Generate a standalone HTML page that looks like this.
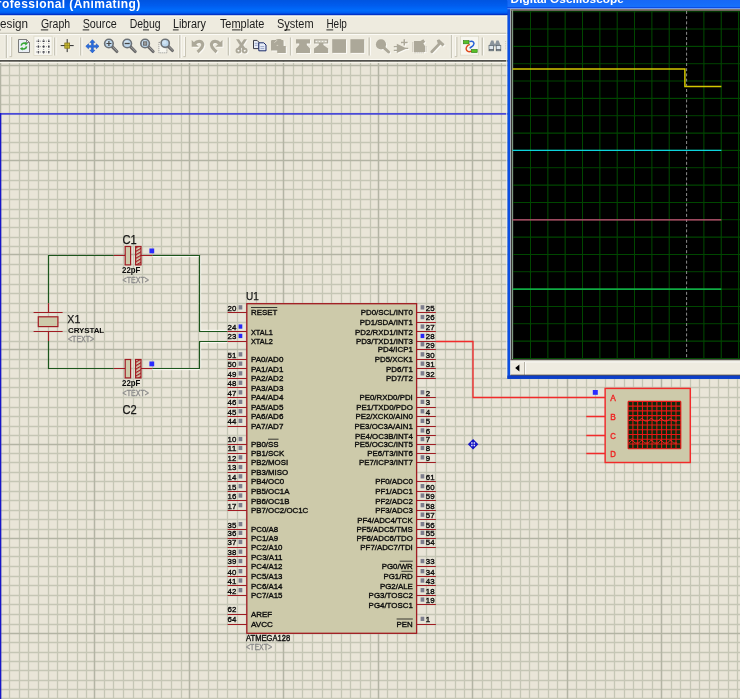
<!DOCTYPE html>
<html lang="en"><head><meta charset="utf-8"><title>ISIS Professional (Animating)</title>
<style>
html,body{margin:0;padding:0;background:#e9e5d8;overflow:hidden}
body{width:740px;height:699px;position:relative}
svg{display:block;position:absolute;left:0;top:0;will-change:transform;font-family:'Liberation Sans', sans-serif}
</style></head><body>
<svg width="740" height="699" viewBox="0 0 740 699">
<defs>
<linearGradient id="tb" x1="0" y1="0" x2="0" y2="1"><stop offset="0" stop-color="#0255e0"/><stop offset="0.35" stop-color="#025cee"/><stop offset="0.68" stop-color="#046cfc"/><stop offset="0.84" stop-color="#025cf0"/><stop offset="0.93" stop-color="#0232c8"/><stop offset="1" stop-color="#0232c8"/></linearGradient>
<linearGradient id="tb2" x1="0" y1="0" x2="0" y2="1"><stop offset="0" stop-color="#1468f6"/><stop offset="0.72" stop-color="#1670fa"/><stop offset="0.84" stop-color="#0444e0"/><stop offset="0.95" stop-color="#6a9cff"/><stop offset="1" stop-color="#6a9cff"/></linearGradient>
<pattern id="hatch" width="3" height="3" patternUnits="userSpaceOnUse" patternTransform="rotate(60)"><rect width="3" height="3" fill="#d6d2b4"/><rect width="1.3" height="3" fill="#a62028"/></pattern>
<filter id="soft" filterUnits="userSpaceOnUse" x="-8" y="-8" width="756" height="715"><feGaussianBlur stdDeviation="0.38"/></filter>
</defs>
<g filter="url(#soft)">
<rect x="-8" y="61" width="756" height="646" fill="#e9e5d8"/>
<g fill="none"><path d="M9.5 61V707M19.5 61V707M28.5 61V707M38.5 61V707M48.5 61V707M57.5 61V707M67.5 61V707M77.5 61V707M86.5 61V707M104.5 61V707M113.5 61V707M123.5 61V707M133.5 61V707M142.5 61V707M152.5 61V707M161.5 61V707M171.5 61V707M181.5 61V707M198.5 61V707M208.5 61V707M217.5 61V707M227.5 61V707M237.5 61V707M246.5 61V707M256.5 61V707M266.5 61V707M275.5 61V707M293.5 61V707M302.5 61V707M312.5 61V707M322.5 61V707M331.5 61V707M341.5 61V707M350.5 61V707M360.5 61V707M370.5 61V707M387.5 61V707M397.5 61V707M406.5 61V707M416.5 61V707M426.5 61V707M435.5 61V707M445.5 61V707M455.5 61V707M464.5 61V707M482.5 61V707M491.5 61V707M501.5 61V707M510.5 61V707M520.5 61V707M529.5 61V707M538.5 61V707M548.5 61V707M557.5 61V707M576.5 61V707M586.5 61V707M595.5 61V707M605.5 61V707M614.5 61V707M624.5 61V707M633.5 61V707M642.5 61V707M652.5 61V707M671.5 61V707M680.5 61V707M690.5 61V707M699.5 61V707M709.5 61V707M718.5 61V707M728.5 61V707M737.5 61V707M-8 75.5H748M-8 85.5H748M-8 95.5H748M-8 104.5H748M-8 113.5H748M-8 123.5H748M-8 133.5H748M-8 142.5H748M-8 152.5H748M-8 170.5H748M-8 180.5H748M-8 189.5H748M-8 199.5H748M-8 209.5H748M-8 218.5H748M-8 227.5H748M-8 237.5H748M-8 246.5H748M-8 264.5H748M-8 274.5H748M-8 284.5H748M-8 293.5H748M-8 303.5H748M-8 312.5H748M-8 322.5H748M-8 331.5H748M-8 341.5H748M-8 359.5H748M-8 368.5H748M-8 378.5H748M-8 387.5H748M-8 397.5H748M-8 407.5H748M-8 416.5H748M-8 426.5H748M-8 435.5H748M-8 453.5H748M-8 462.5H748M-8 472.5H748M-8 481.5H748M-8 491.5H748M-8 500.5H748M-8 510.5H748M-8 519.5H748M-8 529.5H748M-8 547.5H748M-8 556.5H748M-8 566.5H748M-8 576.5H748M-8 585.5H748M-8 595.5H748M-8 604.5H748M-8 614.5H748M-8 624.5H748M-8 642.5H748M-8 652.5H748M-8 661.5H748M-8 670.5H748M-8 680.5H748M-8 689.5H748M-8 698.5H748" stroke="#c5c6b5" stroke-width="1.3"/><path d="M0.5 61V707M94.5 61V707M189.5 61V707M283.5 61V707M378.5 61V707M472.5 61V707M567.5 61V707M661.5 61V707M-8 65.5H748M-8 160.5H748M-8 254.5H748M-8 349.5H748M-8 444.5H748M-8 538.5H748M-8 633.5H748" stroke="#b3b4a4" stroke-width="1.5"/></g>
<path d="M0 113.9H748" fill="none" stroke="#4a4ad8" stroke-width="1.8"/><path d="M0.4 707V113" fill="none" stroke="#1414c8" stroke-width="1.8"/>
<path d="M152.30 256.65H200.65V330.35H227.56M152.30 369.65H199.50M200.65 368.50V342.65H227.56" fill="none" stroke="#fcfbf6" stroke-width="1"/>
<g fill="none" stroke="#1e561e" stroke-width="1.2">
<path d="M113.78 255.50H48.50V303.20"/>
<path d="M152.30 255.50H199.50V331.50H227.56"/>
<path d="M48.50 341.10V368.50H113.78"/>
<path d="M152.30 368.50H199.50V341.50H227.56"/>
</g>
<path d="M435.86 341.50H473.0V397.50H605.14" fill="none" stroke="#f22c2c" stroke-width="1.35"/>
<g fill="none" stroke="#a01a22" stroke-width="1.2">
<path d="M48.50 303.20V312.50M48.50 331.70V341.10"/>
<path d="M33.6 312.50H62.6M33.6 331.50H62.6"/>
<rect x="38.3" y="316.8" width="19.6" height="9.8" fill="#cdcaaa"/>
</g>
<text x="67.30" y="322.60" font-size="11.6" fill="#161616" stroke="#161616" stroke-width="0.25" textLength="13.00" lengthAdjust="spacingAndGlyphs">X1</text>
<text x="68.00" y="333.20" font-size="8" fill="#0c0c0c" font-weight="bold" textLength="36.20" lengthAdjust="spacing">CRYSTAL</text>
<text x="68.00" y="342.20" font-size="8.3" fill="#8a8a8a" stroke="#8a8a8a" stroke-width="0.3" textLength="26.20" lengthAdjust="spacingAndGlyphs">&lt;TEXT&gt;</text>
<g fill="none" stroke="#a01a22" stroke-width="1.2">
<path d="M113.78 255.50H125M141 255.50H152.30"/>
<rect x="125.2" y="246.50" width="5.4" height="18.4" fill="#cdcaaa"/>
<rect x="135.6" y="246.50" width="5.4" height="18.4" fill="url(#hatch)"/>
</g>
<rect x="149.4" y="248.50" width="4.8" height="4.8" fill="#2a2aff"/>
<text x="122.00" y="273.30" font-size="8.5" fill="#0c0c0c" font-weight="bold" textLength="18.40" lengthAdjust="spacingAndGlyphs">22pF</text>
<text x="122.60" y="282.80" font-size="8.3" fill="#8a8a8a" stroke="#8a8a8a" stroke-width="0.3" textLength="26.20" lengthAdjust="spacingAndGlyphs">&lt;TEXT&gt;</text>
<text x="122.40" y="244.00" font-size="12" fill="#161616" stroke="#161616" stroke-width="0.25" textLength="14.20" lengthAdjust="spacingAndGlyphs">C1</text>
<g fill="none" stroke="#a01a22" stroke-width="1.2">
<path d="M113.78 368.50H125M141 368.50H152.30"/>
<rect x="125.2" y="359.50" width="5.4" height="18.4" fill="#cdcaaa"/>
<rect x="135.6" y="359.50" width="5.4" height="18.4" fill="url(#hatch)"/>
</g>
<rect x="149.4" y="361.50" width="4.8" height="4.8" fill="#2a2aff"/>
<text x="122.00" y="386.30" font-size="8.5" fill="#0c0c0c" font-weight="bold" textLength="18.40" lengthAdjust="spacingAndGlyphs">22pF</text>
<text x="122.60" y="395.80" font-size="8.3" fill="#8a8a8a" stroke="#8a8a8a" stroke-width="0.3" textLength="26.20" lengthAdjust="spacingAndGlyphs">&lt;TEXT&gt;</text>
<text x="122.40" y="413.60" font-size="12" fill="#161616" stroke="#161616" stroke-width="0.25" textLength="14.20" lengthAdjust="spacingAndGlyphs">C2</text>
<rect x="246.82" y="303.70" width="169.78" height="329.60" fill="#cdcaaa" stroke="#a01a22" stroke-width="1.3"/>
<text x="246.00" y="299.70" font-size="11.4" fill="#161616" stroke="#161616" stroke-width="0.25" textLength="12.80" lengthAdjust="spacingAndGlyphs">U1</text>
<text x="246.00" y="640.90" font-size="8.5" fill="#0c0c0c" stroke="#0c0c0c" stroke-width="0.35" textLength="44.20" lengthAdjust="spacingAndGlyphs">ATMEGA128</text>
<text x="246.00" y="650.20" font-size="8.3" fill="#8a8a8a" stroke="#8a8a8a" stroke-width="0.3" textLength="26.20" lengthAdjust="spacingAndGlyphs">&lt;TEXT&gt;</text>
<path d="M227.56 312.50H246.82M227.56 331.50H246.82M227.56 341.50H246.82M227.56 359.50H246.82M227.56 368.50H246.82M227.56 378.50H246.82M227.56 387.50H246.82M227.56 397.50H246.82M227.56 407.50H246.82M227.56 416.50H246.82M227.56 426.50H246.82M227.56 444.50H246.82M227.56 453.50H246.82M227.56 462.50H246.82M227.56 472.50H246.82M227.56 481.50H246.82M227.56 491.50H246.82M227.56 500.50H246.82M227.56 510.50H246.82M227.56 529.50H246.82M227.56 538.50H246.82M227.56 547.50H246.82M227.56 556.50H246.82M227.56 566.50H246.82M227.56 576.50H246.82M227.56 585.50H246.82M227.56 595.50H246.82M227.56 614.50H246.82M227.56 624.50H246.82M416.60 312.50H435.86M416.60 322.50H435.86M416.60 331.50H435.86M416.60 341.50H435.86M416.60 349.50H435.86M416.60 359.50H435.86M416.60 368.50H435.86M416.60 378.50H435.86M416.60 397.50H435.86M416.60 407.50H435.86M416.60 416.50H435.86M416.60 426.50H435.86M416.60 435.50H435.86M416.60 444.50H435.86M416.60 453.50H435.86M416.60 462.50H435.86M416.60 481.50H435.86M416.60 491.50H435.86M416.60 500.50H435.86M416.60 510.50H435.86M416.60 519.50H435.86M416.60 529.50H435.86M416.60 538.50H435.86M416.60 547.50H435.86M416.60 566.50H435.86M416.60 576.50H435.86M416.60 585.50H435.86M416.60 595.50H435.86M416.60 604.50H435.86M416.60 624.50H435.86" fill="none" stroke="#a01a22" stroke-width="1.2"/>
<text x="227.60" y="310.70" font-size="7.7" fill="#0c0c0c" stroke="#0c0c0c" stroke-width="0.35" textLength="8.75" lengthAdjust="spacingAndGlyphs">20</text>
<text x="251.00" y="315.40" font-size="7.8" fill="#0c0c0c" stroke="#0c0c0c" stroke-width="0.35" textLength="26.24" lengthAdjust="spacingAndGlyphs">RESET</text>
<rect x="238.6" y="305.20" width="3.7" height="4.3" fill="#7d7d8c"/>
<text x="227.60" y="329.90" font-size="7.7" fill="#0c0c0c" stroke="#0c0c0c" stroke-width="0.35" textLength="8.75" lengthAdjust="spacingAndGlyphs">24</text>
<text x="251.00" y="334.60" font-size="7.8" fill="#0c0c0c" stroke="#0c0c0c" stroke-width="0.35" textLength="21.80" lengthAdjust="spacingAndGlyphs">XTAL1</text>
<rect x="238.6" y="324.40" width="3.7" height="4.3" fill="#2626f5"/>
<text x="227.60" y="339.30" font-size="7.7" fill="#0c0c0c" stroke="#0c0c0c" stroke-width="0.35" textLength="8.75" lengthAdjust="spacingAndGlyphs">23</text>
<text x="251.00" y="344.00" font-size="7.8" fill="#0c0c0c" stroke="#0c0c0c" stroke-width="0.35" textLength="21.80" lengthAdjust="spacingAndGlyphs">XTAL2</text>
<rect x="238.6" y="333.80" width="3.7" height="4.3" fill="#2626f5"/>
<text x="227.60" y="357.70" font-size="7.7" fill="#0c0c0c" stroke="#0c0c0c" stroke-width="0.35" textLength="8.75" lengthAdjust="spacingAndGlyphs">51</text>
<text x="251.00" y="362.40" font-size="7.8" fill="#0c0c0c" stroke="#0c0c0c" stroke-width="0.35" textLength="32.37" lengthAdjust="spacingAndGlyphs">PA0/AD0</text>
<rect x="238.6" y="352.20" width="3.7" height="4.3" fill="#7d7d8c"/>
<text x="227.60" y="367.00" font-size="7.7" fill="#0c0c0c" stroke="#0c0c0c" stroke-width="0.35" textLength="8.75" lengthAdjust="spacingAndGlyphs">50</text>
<text x="251.00" y="371.70" font-size="7.8" fill="#0c0c0c" stroke="#0c0c0c" stroke-width="0.35" textLength="32.37" lengthAdjust="spacingAndGlyphs">PA1/AD1</text>
<rect x="238.6" y="361.50" width="3.7" height="4.3" fill="#7d7d8c"/>
<text x="227.60" y="376.70" font-size="7.7" fill="#0c0c0c" stroke="#0c0c0c" stroke-width="0.35" textLength="8.75" lengthAdjust="spacingAndGlyphs">49</text>
<text x="251.00" y="381.40" font-size="7.8" fill="#0c0c0c" stroke="#0c0c0c" stroke-width="0.35" textLength="32.37" lengthAdjust="spacingAndGlyphs">PA2/AD2</text>
<rect x="238.6" y="371.20" width="3.7" height="4.3" fill="#7d7d8c"/>
<text x="227.60" y="386.10" font-size="7.7" fill="#0c0c0c" stroke="#0c0c0c" stroke-width="0.35" textLength="8.75" lengthAdjust="spacingAndGlyphs">48</text>
<text x="251.00" y="390.80" font-size="7.8" fill="#0c0c0c" stroke="#0c0c0c" stroke-width="0.35" textLength="32.37" lengthAdjust="spacingAndGlyphs">PA3/AD3</text>
<rect x="238.6" y="380.60" width="3.7" height="4.3" fill="#7d7d8c"/>
<text x="227.60" y="395.70" font-size="7.7" fill="#0c0c0c" stroke="#0c0c0c" stroke-width="0.35" textLength="8.75" lengthAdjust="spacingAndGlyphs">47</text>
<text x="251.00" y="400.40" font-size="7.8" fill="#0c0c0c" stroke="#0c0c0c" stroke-width="0.35" textLength="32.37" lengthAdjust="spacingAndGlyphs">PA4/AD4</text>
<rect x="238.6" y="390.20" width="3.7" height="4.3" fill="#7d7d8c"/>
<text x="227.60" y="405.20" font-size="7.7" fill="#0c0c0c" stroke="#0c0c0c" stroke-width="0.35" textLength="8.75" lengthAdjust="spacingAndGlyphs">46</text>
<text x="251.00" y="409.90" font-size="7.8" fill="#0c0c0c" stroke="#0c0c0c" stroke-width="0.35" textLength="32.37" lengthAdjust="spacingAndGlyphs">PA5/AD5</text>
<rect x="238.6" y="399.70" width="3.7" height="4.3" fill="#7d7d8c"/>
<text x="227.60" y="414.60" font-size="7.7" fill="#0c0c0c" stroke="#0c0c0c" stroke-width="0.35" textLength="8.75" lengthAdjust="spacingAndGlyphs">45</text>
<text x="251.00" y="419.30" font-size="7.8" fill="#0c0c0c" stroke="#0c0c0c" stroke-width="0.35" textLength="32.37" lengthAdjust="spacingAndGlyphs">PA6/AD6</text>
<rect x="238.6" y="409.10" width="3.7" height="4.3" fill="#7d7d8c"/>
<text x="227.60" y="424.20" font-size="7.7" fill="#0c0c0c" stroke="#0c0c0c" stroke-width="0.35" textLength="8.75" lengthAdjust="spacingAndGlyphs">44</text>
<text x="251.00" y="428.90" font-size="7.8" fill="#0c0c0c" stroke="#0c0c0c" stroke-width="0.35" textLength="32.37" lengthAdjust="spacingAndGlyphs">PA7/AD7</text>
<rect x="238.6" y="418.70" width="3.7" height="4.3" fill="#7d7d8c"/>
<text x="227.60" y="442.40" font-size="7.7" fill="#0c0c0c" stroke="#0c0c0c" stroke-width="0.35" textLength="8.75" lengthAdjust="spacingAndGlyphs">10</text>
<text x="251.00" y="447.10" font-size="7.8" fill="#0c0c0c" stroke="#0c0c0c" stroke-width="0.35" textLength="27.56" lengthAdjust="spacingAndGlyphs">PB0/SS</text>
<rect x="238.6" y="436.90" width="3.7" height="4.3" fill="#7d7d8c"/>
<text x="227.60" y="451.30" font-size="7.7" fill="#0c0c0c" stroke="#0c0c0c" stroke-width="0.35" textLength="8.75" lengthAdjust="spacingAndGlyphs">11</text>
<text x="251.00" y="456.00" font-size="7.8" fill="#0c0c0c" stroke="#0c0c0c" stroke-width="0.35" textLength="33.24" lengthAdjust="spacingAndGlyphs">PB1/SCK</text>
<rect x="238.6" y="445.80" width="3.7" height="4.3" fill="#7d7d8c"/>
<text x="227.60" y="460.70" font-size="7.7" fill="#0c0c0c" stroke="#0c0c0c" stroke-width="0.35" textLength="8.75" lengthAdjust="spacingAndGlyphs">12</text>
<text x="251.00" y="465.40" font-size="7.8" fill="#0c0c0c" stroke="#0c0c0c" stroke-width="0.35" textLength="37.17" lengthAdjust="spacingAndGlyphs">PB2/MOSI</text>
<rect x="238.6" y="455.20" width="3.7" height="4.3" fill="#7d7d8c"/>
<text x="227.60" y="470.40" font-size="7.7" fill="#0c0c0c" stroke="#0c0c0c" stroke-width="0.35" textLength="8.75" lengthAdjust="spacingAndGlyphs">13</text>
<text x="251.00" y="475.10" font-size="7.8" fill="#0c0c0c" stroke="#0c0c0c" stroke-width="0.35" textLength="37.17" lengthAdjust="spacingAndGlyphs">PB3/MISO</text>
<rect x="238.6" y="464.90" width="3.7" height="4.3" fill="#7d7d8c"/>
<text x="227.60" y="479.70" font-size="7.7" fill="#0c0c0c" stroke="#0c0c0c" stroke-width="0.35" textLength="8.75" lengthAdjust="spacingAndGlyphs">14</text>
<text x="251.00" y="484.40" font-size="7.8" fill="#0c0c0c" stroke="#0c0c0c" stroke-width="0.35" textLength="33.24" lengthAdjust="spacingAndGlyphs">PB4/OC0</text>
<rect x="238.6" y="474.20" width="3.7" height="4.3" fill="#7d7d8c"/>
<text x="227.60" y="489.50" font-size="7.7" fill="#0c0c0c" stroke="#0c0c0c" stroke-width="0.35" textLength="8.75" lengthAdjust="spacingAndGlyphs">15</text>
<text x="251.00" y="494.20" font-size="7.8" fill="#0c0c0c" stroke="#0c0c0c" stroke-width="0.35" textLength="38.49" lengthAdjust="spacingAndGlyphs">PB5/OC1A</text>
<rect x="238.6" y="484.00" width="3.7" height="4.3" fill="#7d7d8c"/>
<text x="227.60" y="498.90" font-size="7.7" fill="#0c0c0c" stroke="#0c0c0c" stroke-width="0.35" textLength="8.75" lengthAdjust="spacingAndGlyphs">16</text>
<text x="251.00" y="503.60" font-size="7.8" fill="#0c0c0c" stroke="#0c0c0c" stroke-width="0.35" textLength="38.49" lengthAdjust="spacingAndGlyphs">PB6/OC1B</text>
<rect x="238.6" y="493.40" width="3.7" height="4.3" fill="#7d7d8c"/>
<text x="227.60" y="508.50" font-size="7.7" fill="#0c0c0c" stroke="#0c0c0c" stroke-width="0.35" textLength="8.75" lengthAdjust="spacingAndGlyphs">17</text>
<text x="251.00" y="513.20" font-size="7.8" fill="#0c0c0c" stroke="#0c0c0c" stroke-width="0.35" textLength="57.29" lengthAdjust="spacingAndGlyphs">PB7/OC2/OC1C</text>
<rect x="238.6" y="503.00" width="3.7" height="4.3" fill="#7d7d8c"/>
<text x="227.60" y="527.50" font-size="7.7" fill="#0c0c0c" stroke="#0c0c0c" stroke-width="0.35" textLength="8.75" lengthAdjust="spacingAndGlyphs">35</text>
<text x="251.00" y="532.20" font-size="7.8" fill="#0c0c0c" stroke="#0c0c0c" stroke-width="0.35" textLength="27.12" lengthAdjust="spacingAndGlyphs">PC0/A8</text>
<rect x="238.6" y="522.00" width="3.7" height="4.3" fill="#7d7d8c"/>
<text x="227.60" y="536.20" font-size="7.7" fill="#0c0c0c" stroke="#0c0c0c" stroke-width="0.35" textLength="8.75" lengthAdjust="spacingAndGlyphs">36</text>
<text x="251.00" y="540.90" font-size="7.8" fill="#0c0c0c" stroke="#0c0c0c" stroke-width="0.35" textLength="27.12" lengthAdjust="spacingAndGlyphs">PC1/A9</text>
<rect x="238.6" y="530.70" width="3.7" height="4.3" fill="#7d7d8c"/>
<text x="227.60" y="545.30" font-size="7.7" fill="#0c0c0c" stroke="#0c0c0c" stroke-width="0.35" textLength="8.75" lengthAdjust="spacingAndGlyphs">37</text>
<text x="251.00" y="550.00" font-size="7.8" fill="#0c0c0c" stroke="#0c0c0c" stroke-width="0.35" textLength="31.49" lengthAdjust="spacingAndGlyphs">PC2/A10</text>
<rect x="238.6" y="539.80" width="3.7" height="4.3" fill="#7d7d8c"/>
<text x="227.60" y="555.00" font-size="7.7" fill="#0c0c0c" stroke="#0c0c0c" stroke-width="0.35" textLength="8.75" lengthAdjust="spacingAndGlyphs">38</text>
<text x="251.00" y="559.70" font-size="7.8" fill="#0c0c0c" stroke="#0c0c0c" stroke-width="0.35" textLength="31.49" lengthAdjust="spacingAndGlyphs">PC3/A11</text>
<rect x="238.6" y="549.50" width="3.7" height="4.3" fill="#7d7d8c"/>
<text x="227.60" y="564.40" font-size="7.7" fill="#0c0c0c" stroke="#0c0c0c" stroke-width="0.35" textLength="8.75" lengthAdjust="spacingAndGlyphs">39</text>
<text x="251.00" y="569.10" font-size="7.8" fill="#0c0c0c" stroke="#0c0c0c" stroke-width="0.35" textLength="31.49" lengthAdjust="spacingAndGlyphs">PC4/A12</text>
<rect x="238.6" y="558.90" width="3.7" height="4.3" fill="#7d7d8c"/>
<text x="227.60" y="574.50" font-size="7.7" fill="#0c0c0c" stroke="#0c0c0c" stroke-width="0.35" textLength="8.75" lengthAdjust="spacingAndGlyphs">40</text>
<text x="251.00" y="579.20" font-size="7.8" fill="#0c0c0c" stroke="#0c0c0c" stroke-width="0.35" textLength="31.49" lengthAdjust="spacingAndGlyphs">PC5/A13</text>
<rect x="238.6" y="569.00" width="3.7" height="4.3" fill="#7d7d8c"/>
<text x="227.60" y="583.90" font-size="7.7" fill="#0c0c0c" stroke="#0c0c0c" stroke-width="0.35" textLength="8.75" lengthAdjust="spacingAndGlyphs">41</text>
<text x="251.00" y="588.60" font-size="7.8" fill="#0c0c0c" stroke="#0c0c0c" stroke-width="0.35" textLength="31.49" lengthAdjust="spacingAndGlyphs">PC6/A14</text>
<rect x="238.6" y="578.40" width="3.7" height="4.3" fill="#7d7d8c"/>
<text x="227.60" y="593.50" font-size="7.7" fill="#0c0c0c" stroke="#0c0c0c" stroke-width="0.35" textLength="8.75" lengthAdjust="spacingAndGlyphs">42</text>
<text x="251.00" y="598.20" font-size="7.8" fill="#0c0c0c" stroke="#0c0c0c" stroke-width="0.35" textLength="31.49" lengthAdjust="spacingAndGlyphs">PC7/A15</text>
<rect x="238.6" y="588.00" width="3.7" height="4.3" fill="#7d7d8c"/>
<text x="227.60" y="612.30" font-size="7.7" fill="#0c0c0c" stroke="#0c0c0c" stroke-width="0.35" textLength="8.75" lengthAdjust="spacingAndGlyphs">62</text>
<text x="251.00" y="617.00" font-size="7.8" fill="#0c0c0c" stroke="#0c0c0c" stroke-width="0.35" textLength="20.99" lengthAdjust="spacingAndGlyphs">AREF</text>
<text x="227.60" y="622.20" font-size="7.7" fill="#0c0c0c" stroke="#0c0c0c" stroke-width="0.35" textLength="8.75" lengthAdjust="spacingAndGlyphs">64</text>
<text x="251.00" y="626.90" font-size="7.8" fill="#0c0c0c" stroke="#0c0c0c" stroke-width="0.35" textLength="21.86" lengthAdjust="spacingAndGlyphs">AVCC</text>
<text x="425.80" y="310.70" font-size="7.7" fill="#0c0c0c" stroke="#0c0c0c" stroke-width="0.35" textLength="8.75" lengthAdjust="spacingAndGlyphs">25</text>
<text x="360.76" y="315.40" font-size="7.8" fill="#0c0c0c" stroke="#0c0c0c" stroke-width="0.35" textLength="52.04" lengthAdjust="spacingAndGlyphs">PD0/SCL/INT0</text>
<rect x="420.6" y="305.20" width="3.7" height="4.3" fill="#7d7d8c"/>
<text x="425.80" y="320.40" font-size="7.7" fill="#0c0c0c" stroke="#0c0c0c" stroke-width="0.35" textLength="8.75" lengthAdjust="spacingAndGlyphs">26</text>
<text x="359.89" y="325.10" font-size="7.8" fill="#0c0c0c" stroke="#0c0c0c" stroke-width="0.35" textLength="52.91" lengthAdjust="spacingAndGlyphs">PD1/SDA/INT1</text>
<rect x="420.6" y="314.90" width="3.7" height="4.3" fill="#7d7d8c"/>
<text x="425.80" y="329.90" font-size="7.7" fill="#0c0c0c" stroke="#0c0c0c" stroke-width="0.35" textLength="8.75" lengthAdjust="spacingAndGlyphs">27</text>
<text x="355.08" y="334.60" font-size="7.8" fill="#0c0c0c" stroke="#0c0c0c" stroke-width="0.35" textLength="57.72" lengthAdjust="spacingAndGlyphs">PD2/RXD1/INT2</text>
<rect x="420.6" y="324.40" width="3.7" height="4.3" fill="#7d7d8c"/>
<text x="425.80" y="339.30" font-size="7.7" fill="#0c0c0c" stroke="#0c0c0c" stroke-width="0.35" textLength="8.75" lengthAdjust="spacingAndGlyphs">28</text>
<text x="355.95" y="344.00" font-size="7.8" fill="#0c0c0c" stroke="#0c0c0c" stroke-width="0.35" textLength="56.85" lengthAdjust="spacingAndGlyphs">PD3/TXD1/INT3</text>
<rect x="420.6" y="333.80" width="3.7" height="4.3" fill="#2626f5"/>
<text x="425.80" y="347.60" font-size="7.7" fill="#0c0c0c" stroke="#0c0c0c" stroke-width="0.35" textLength="8.75" lengthAdjust="spacingAndGlyphs">29</text>
<text x="377.81" y="352.30" font-size="7.8" fill="#0c0c0c" stroke="#0c0c0c" stroke-width="0.35" textLength="34.99" lengthAdjust="spacingAndGlyphs">PD4/ICP1</text>
<rect x="420.6" y="342.10" width="3.7" height="4.3" fill="#7d7d8c"/>
<text x="425.80" y="357.70" font-size="7.7" fill="#0c0c0c" stroke="#0c0c0c" stroke-width="0.35" textLength="8.75" lengthAdjust="spacingAndGlyphs">30</text>
<text x="374.75" y="362.40" font-size="7.8" fill="#0c0c0c" stroke="#0c0c0c" stroke-width="0.35" textLength="38.05" lengthAdjust="spacingAndGlyphs">PD5/XCK1</text>
<rect x="420.6" y="352.20" width="3.7" height="4.3" fill="#7d7d8c"/>
<text x="425.80" y="367.00" font-size="7.7" fill="#0c0c0c" stroke="#0c0c0c" stroke-width="0.35" textLength="8.75" lengthAdjust="spacingAndGlyphs">31</text>
<text x="386.12" y="371.70" font-size="7.8" fill="#0c0c0c" stroke="#0c0c0c" stroke-width="0.35" textLength="26.68" lengthAdjust="spacingAndGlyphs">PD6/T1</text>
<rect x="420.6" y="361.50" width="3.7" height="4.3" fill="#7d7d8c"/>
<text x="425.80" y="376.70" font-size="7.7" fill="#0c0c0c" stroke="#0c0c0c" stroke-width="0.35" textLength="8.75" lengthAdjust="spacingAndGlyphs">32</text>
<text x="386.12" y="381.40" font-size="7.8" fill="#0c0c0c" stroke="#0c0c0c" stroke-width="0.35" textLength="26.68" lengthAdjust="spacingAndGlyphs">PD7/T2</text>
<rect x="420.6" y="371.20" width="3.7" height="4.3" fill="#7d7d8c"/>
<text x="425.80" y="395.70" font-size="7.7" fill="#0c0c0c" stroke="#0c0c0c" stroke-width="0.35" textLength="4.38" lengthAdjust="spacingAndGlyphs">2</text>
<text x="359.45" y="400.40" font-size="7.8" fill="#0c0c0c" stroke="#0c0c0c" stroke-width="0.35" textLength="53.35" lengthAdjust="spacingAndGlyphs">PE0/RXD0/PDI</text>
<rect x="420.6" y="390.20" width="3.7" height="4.3" fill="#7d7d8c"/>
<text x="425.80" y="405.20" font-size="7.7" fill="#0c0c0c" stroke="#0c0c0c" stroke-width="0.35" textLength="4.38" lengthAdjust="spacingAndGlyphs">3</text>
<text x="356.39" y="409.90" font-size="7.8" fill="#0c0c0c" stroke="#0c0c0c" stroke-width="0.35" textLength="56.41" lengthAdjust="spacingAndGlyphs">PE1/TXD0/PDO</text>
<rect x="420.6" y="399.70" width="3.7" height="4.3" fill="#7d7d8c"/>
<text x="425.80" y="414.60" font-size="7.7" fill="#0c0c0c" stroke="#0c0c0c" stroke-width="0.35" textLength="4.38" lengthAdjust="spacingAndGlyphs">4</text>
<text x="355.51" y="419.30" font-size="7.8" fill="#0c0c0c" stroke="#0c0c0c" stroke-width="0.35" textLength="57.29" lengthAdjust="spacingAndGlyphs">PE2/XCK0/AIN0</text>
<rect x="420.6" y="409.10" width="3.7" height="4.3" fill="#7d7d8c"/>
<text x="425.80" y="424.20" font-size="7.7" fill="#0c0c0c" stroke="#0c0c0c" stroke-width="0.35" textLength="4.38" lengthAdjust="spacingAndGlyphs">5</text>
<text x="354.63" y="428.90" font-size="7.8" fill="#0c0c0c" stroke="#0c0c0c" stroke-width="0.35" textLength="58.17" lengthAdjust="spacingAndGlyphs">PE3/OC3A/AIN1</text>
<rect x="420.6" y="418.70" width="3.7" height="4.3" fill="#7d7d8c"/>
<text x="425.80" y="433.80" font-size="7.7" fill="#0c0c0c" stroke="#0c0c0c" stroke-width="0.35" textLength="4.38" lengthAdjust="spacingAndGlyphs">6</text>
<text x="355.07" y="438.50" font-size="7.8" fill="#0c0c0c" stroke="#0c0c0c" stroke-width="0.35" textLength="57.73" lengthAdjust="spacingAndGlyphs">PE4/OC3B/INT4</text>
<rect x="420.6" y="428.30" width="3.7" height="4.3" fill="#7d7d8c"/>
<text x="425.80" y="442.40" font-size="7.7" fill="#0c0c0c" stroke="#0c0c0c" stroke-width="0.35" textLength="4.38" lengthAdjust="spacingAndGlyphs">7</text>
<text x="354.64" y="447.10" font-size="7.8" fill="#0c0c0c" stroke="#0c0c0c" stroke-width="0.35" textLength="58.16" lengthAdjust="spacingAndGlyphs">PE5/OC3C/INT5</text>
<rect x="420.6" y="436.90" width="3.7" height="4.3" fill="#7d7d8c"/>
<text x="425.80" y="451.30" font-size="7.7" fill="#0c0c0c" stroke="#0c0c0c" stroke-width="0.35" textLength="4.38" lengthAdjust="spacingAndGlyphs">8</text>
<text x="367.32" y="456.00" font-size="7.8" fill="#0c0c0c" stroke="#0c0c0c" stroke-width="0.35" textLength="45.48" lengthAdjust="spacingAndGlyphs">PE6/T3/INT6</text>
<rect x="420.6" y="445.80" width="3.7" height="4.3" fill="#7d7d8c"/>
<text x="425.80" y="460.70" font-size="7.7" fill="#0c0c0c" stroke="#0c0c0c" stroke-width="0.35" textLength="4.38" lengthAdjust="spacingAndGlyphs">9</text>
<text x="359.01" y="465.40" font-size="7.8" fill="#0c0c0c" stroke="#0c0c0c" stroke-width="0.35" textLength="53.79" lengthAdjust="spacingAndGlyphs">PE7/ICP3/INT7</text>
<rect x="420.6" y="455.20" width="3.7" height="4.3" fill="#7d7d8c"/>
<text x="425.80" y="479.70" font-size="7.7" fill="#0c0c0c" stroke="#0c0c0c" stroke-width="0.35" textLength="8.75" lengthAdjust="spacingAndGlyphs">61</text>
<text x="375.19" y="484.40" font-size="7.8" fill="#0c0c0c" stroke="#0c0c0c" stroke-width="0.35" textLength="37.61" lengthAdjust="spacingAndGlyphs">PF0/ADC0</text>
<rect x="420.6" y="474.20" width="3.7" height="4.3" fill="#7d7d8c"/>
<text x="425.80" y="489.50" font-size="7.7" fill="#0c0c0c" stroke="#0c0c0c" stroke-width="0.35" textLength="8.75" lengthAdjust="spacingAndGlyphs">60</text>
<text x="375.19" y="494.20" font-size="7.8" fill="#0c0c0c" stroke="#0c0c0c" stroke-width="0.35" textLength="37.61" lengthAdjust="spacingAndGlyphs">PF1/ADC1</text>
<rect x="420.6" y="484.00" width="3.7" height="4.3" fill="#7d7d8c"/>
<text x="425.80" y="498.90" font-size="7.7" fill="#0c0c0c" stroke="#0c0c0c" stroke-width="0.35" textLength="8.75" lengthAdjust="spacingAndGlyphs">59</text>
<text x="375.19" y="503.60" font-size="7.8" fill="#0c0c0c" stroke="#0c0c0c" stroke-width="0.35" textLength="37.61" lengthAdjust="spacingAndGlyphs">PF2/ADC2</text>
<rect x="420.6" y="493.40" width="3.7" height="4.3" fill="#7d7d8c"/>
<text x="425.80" y="508.50" font-size="7.7" fill="#0c0c0c" stroke="#0c0c0c" stroke-width="0.35" textLength="8.75" lengthAdjust="spacingAndGlyphs">58</text>
<text x="375.19" y="513.20" font-size="7.8" fill="#0c0c0c" stroke="#0c0c0c" stroke-width="0.35" textLength="37.61" lengthAdjust="spacingAndGlyphs">PF3/ADC3</text>
<rect x="420.6" y="503.00" width="3.7" height="4.3" fill="#7d7d8c"/>
<text x="425.80" y="518.00" font-size="7.7" fill="#0c0c0c" stroke="#0c0c0c" stroke-width="0.35" textLength="8.75" lengthAdjust="spacingAndGlyphs">57</text>
<text x="357.27" y="522.70" font-size="7.8" fill="#0c0c0c" stroke="#0c0c0c" stroke-width="0.35" textLength="55.53" lengthAdjust="spacingAndGlyphs">PF4/ADC4/TCK</text>
<rect x="420.6" y="512.50" width="3.7" height="4.3" fill="#7d7d8c"/>
<text x="425.80" y="527.50" font-size="7.7" fill="#0c0c0c" stroke="#0c0c0c" stroke-width="0.35" textLength="8.75" lengthAdjust="spacingAndGlyphs">56</text>
<text x="356.40" y="532.20" font-size="7.8" fill="#0c0c0c" stroke="#0c0c0c" stroke-width="0.35" textLength="56.40" lengthAdjust="spacingAndGlyphs">PF5/ADC5/TMS</text>
<rect x="420.6" y="522.00" width="3.7" height="4.3" fill="#7d7d8c"/>
<text x="425.80" y="536.20" font-size="7.7" fill="#0c0c0c" stroke="#0c0c0c" stroke-width="0.35" textLength="8.75" lengthAdjust="spacingAndGlyphs">55</text>
<text x="356.40" y="540.90" font-size="7.8" fill="#0c0c0c" stroke="#0c0c0c" stroke-width="0.35" textLength="56.40" lengthAdjust="spacingAndGlyphs">PF6/ADC6/TDO</text>
<rect x="420.6" y="530.70" width="3.7" height="4.3" fill="#7d7d8c"/>
<text x="425.80" y="545.30" font-size="7.7" fill="#0c0c0c" stroke="#0c0c0c" stroke-width="0.35" textLength="8.75" lengthAdjust="spacingAndGlyphs">54</text>
<text x="360.33" y="550.00" font-size="7.8" fill="#0c0c0c" stroke="#0c0c0c" stroke-width="0.35" textLength="52.47" lengthAdjust="spacingAndGlyphs">PF7/ADC7/TDI</text>
<rect x="420.6" y="539.80" width="3.7" height="4.3" fill="#7d7d8c"/>
<text x="425.80" y="564.40" font-size="7.7" fill="#0c0c0c" stroke="#0c0c0c" stroke-width="0.35" textLength="8.75" lengthAdjust="spacingAndGlyphs">33</text>
<text x="381.76" y="569.10" font-size="7.8" fill="#0c0c0c" stroke="#0c0c0c" stroke-width="0.35" textLength="31.04" lengthAdjust="spacingAndGlyphs">PG0/WR</text>
<rect x="420.6" y="558.90" width="3.7" height="4.3" fill="#7d7d8c"/>
<text x="425.80" y="574.50" font-size="7.7" fill="#0c0c0c" stroke="#0c0c0c" stroke-width="0.35" textLength="8.75" lengthAdjust="spacingAndGlyphs">34</text>
<text x="383.50" y="579.20" font-size="7.8" fill="#0c0c0c" stroke="#0c0c0c" stroke-width="0.35" textLength="29.30" lengthAdjust="spacingAndGlyphs">PG1/RD</text>
<rect x="420.6" y="569.00" width="3.7" height="4.3" fill="#7d7d8c"/>
<text x="425.80" y="583.90" font-size="7.7" fill="#0c0c0c" stroke="#0c0c0c" stroke-width="0.35" textLength="8.75" lengthAdjust="spacingAndGlyphs">43</text>
<text x="379.99" y="588.60" font-size="7.8" fill="#0c0c0c" stroke="#0c0c0c" stroke-width="0.35" textLength="32.81" lengthAdjust="spacingAndGlyphs">PG2/ALE</text>
<rect x="420.6" y="578.40" width="3.7" height="4.3" fill="#7d7d8c"/>
<text x="425.80" y="593.50" font-size="7.7" fill="#0c0c0c" stroke="#0c0c0c" stroke-width="0.35" textLength="8.75" lengthAdjust="spacingAndGlyphs">18</text>
<text x="368.63" y="598.20" font-size="7.8" fill="#0c0c0c" stroke="#0c0c0c" stroke-width="0.35" textLength="44.17" lengthAdjust="spacingAndGlyphs">PG3/TOSC2</text>
<rect x="420.6" y="588.00" width="3.7" height="4.3" fill="#7d7d8c"/>
<text x="425.80" y="602.90" font-size="7.7" fill="#0c0c0c" stroke="#0c0c0c" stroke-width="0.35" textLength="8.75" lengthAdjust="spacingAndGlyphs">19</text>
<text x="368.63" y="607.60" font-size="7.8" fill="#0c0c0c" stroke="#0c0c0c" stroke-width="0.35" textLength="44.17" lengthAdjust="spacingAndGlyphs">PG4/TOSC1</text>
<rect x="420.6" y="597.40" width="3.7" height="4.3" fill="#7d7d8c"/>
<text x="425.80" y="622.20" font-size="7.7" fill="#0c0c0c" stroke="#0c0c0c" stroke-width="0.35" textLength="4.38" lengthAdjust="spacingAndGlyphs">1</text>
<text x="396.62" y="626.90" font-size="7.8" fill="#0c0c0c" stroke="#0c0c0c" stroke-width="0.35" textLength="16.18" lengthAdjust="spacingAndGlyphs">PEN</text>
<rect x="420.6" y="616.70" width="3.7" height="4.3" fill="#7d7d8c"/>
<path d="M251 307.50h26.24M268.06 439.20h10.50M399.69 561.20h13.11M401.44 571.30h11.36M396.62 619.00h16.18" fill="none" stroke="#111" stroke-width="0.8"/>
<g transform="translate(473.1 444.3)"><path d="M0 -5.2L5.2 0L0 5.2L-5.2 0Z" fill="#1212c4"/><path d="M-2 -2h1.5v1.5h-1.5zM0.5 -2h1.5v1.5h-1.5zM-2 0.5h1.5v1.5h-1.5zM0.5 0.5h1.5v1.5h-1.5z" fill="#e8e8f6"/></g>
<rect x="605.14" y="388.40" width="85.14" height="74.10" fill="#cdcaaa" stroke="#f22c2c" stroke-width="1.45"/>
<path d="M586.22 416.50H605.14M586.22 435.50H605.14M586.22 453.50H605.14" fill="none" stroke="#f22c2c" stroke-width="1.35"/>
<text x="610.30" y="400.90" font-size="9" fill="#ee2424" stroke="#ee2424" stroke-width="0.4" textLength="5.60" lengthAdjust="spacingAndGlyphs">A</text>
<text x="610.30" y="419.90" font-size="9" fill="#ee2424" stroke="#ee2424" stroke-width="0.4" textLength="5.60" lengthAdjust="spacingAndGlyphs">B</text>
<text x="610.30" y="438.90" font-size="9" fill="#ee2424" stroke="#ee2424" stroke-width="0.4" textLength="5.60" lengthAdjust="spacingAndGlyphs">C</text>
<text x="610.30" y="456.90" font-size="9" fill="#ee2424" stroke="#ee2424" stroke-width="0.4" textLength="5.60" lengthAdjust="spacingAndGlyphs">D</text>
<rect x="592.8" y="390" width="5" height="4.8" fill="#2a2aff"/>
<rect x="628.1" y="401.4" width="52.70" height="47.30" fill="#0c2a08"/>
<path d="M628.10 401.4V448.7M632.89 401.4V448.7M637.68 401.4V448.7M642.47 401.4V448.7M647.26 401.4V448.7M652.05 401.4V448.7M656.85 401.4V448.7M661.64 401.4V448.7M666.43 401.4V448.7M671.22 401.4V448.7M676.01 401.4V448.7M680.80 401.4V448.7M628.1 401.40H680.8M628.1 406.13H680.8M628.1 410.86H680.8M628.1 415.59H680.8M628.1 420.32H680.8M628.1 425.05H680.8M628.1 429.78H680.8M628.1 434.51H680.8M628.1 439.24H680.8M628.1 443.97H680.8M628.1 448.70H680.8" fill="none" stroke="#e81818" stroke-width="1.1"/>
<path d="M629.10 421.00l3 -3l3 3l3.6 0l3 -3l3 3l3.6 0l3 -3l3 3l3.6 0l3 -3l3 3l3.6 0l3 -3l3 3l3.6 0M629.10 443.00l3 -3l3 3l3.6 0l3 -3l3 3l3.6 0l3 -3l3 3l3.6 0l3 -3l3 3l3.6 0l3 -3l3 3l3.6 0" fill="none" stroke="#ff2a2a" stroke-width="0.9"/>
<rect x="-8" y="-8" width="516" height="23.5" fill="#0255e0"/><rect x="-8" y="0" width="516" height="15.5" fill="url(#tb)"/>
<text x="-3.20" y="8.30" font-size="12" fill="#fff" font-weight="bold" textLength="143.40" lengthAdjust="spacing">rofessional (Animating)</text>
<rect x="-8" y="15.4" width="516" height="46" fill="#eeebdf"/><path d="M-8 16.2H508" stroke="#fbfaee" stroke-width="1"/>
<text x="-8.40" y="28.10" font-size="12" fill="#1c1c1c" textLength="36.40" lengthAdjust="spacingAndGlyphs">Design</text>
<text x="40.90" y="28.10" font-size="12" fill="#1c1c1c" textLength="29.20" lengthAdjust="spacingAndGlyphs">Graph</text>
<text x="82.70" y="28.10" font-size="12" fill="#1c1c1c" textLength="34.10" lengthAdjust="spacingAndGlyphs">Source</text>
<text x="129.70" y="28.10" font-size="12" fill="#1c1c1c" textLength="30.90" lengthAdjust="spacingAndGlyphs">Debug</text>
<text x="172.90" y="28.10" font-size="12" fill="#1c1c1c" textLength="33.10" lengthAdjust="spacingAndGlyphs">Library</text>
<text x="219.90" y="28.10" font-size="12" fill="#1c1c1c" textLength="44.50" lengthAdjust="spacingAndGlyphs">Template</text>
<text x="277.00" y="28.10" font-size="12" fill="#1c1c1c" textLength="36.60" lengthAdjust="spacingAndGlyphs">System</text>
<text x="326.40" y="28.10" font-size="12" fill="#1c1c1c" textLength="20.50" lengthAdjust="spacingAndGlyphs">Help</text>
<path d="M-8.4 29.9H0.6M40.9 29.9H48.2M82.7 29.9H89.2M143.0 29.9H149.0M172.9 29.9H178.6M232.0 29.9H240.6M284.4 29.9H290.2M326.4 29.9H333.2" stroke="#111" stroke-width="0.9" fill="none"/>
<path d="M-8 33.3H508" stroke="#c2c0b2" stroke-width="1.1"/>
<path d="M-8 34.5H508" stroke="#fcfbf6" stroke-width="1.1"/>
<path d="M-8 59.7H508" stroke="#faf9f2" stroke-width="1.4"/>
<path d="M-8 60.9H508" stroke="#1a1a18" stroke-width="1.4"/>
<path d="M-8 62.5H508" stroke="#f6f5ec" stroke-width="1"/>
<path d="M5.2 35V58" stroke="#f6f5ee" stroke-width="0.9"/><path d="M6.4 35V58" stroke="#c8c6b8" stroke-width="1.5"/><path d="M7.7 35V58" stroke="#fbfaf5" stroke-width="1.1"/>
<path d="M10.4 36.5V56" stroke="#f9f8f3" stroke-width="1.5"/><path d="M11.7 37V56.6H9.6" fill="none" stroke="#c4c1b0" stroke-width="0.9"/>
<g transform="translate(18 39)"><path d="M0.5 0.5h8l3 3v10h-11z" fill="#eaeff5" stroke="#747474" stroke-width="0.95"/><path d="M8.5 0.5v3h3" fill="none" stroke="#6a6a6a" stroke-width="0.8"/><path d="M3.2 6.6a3 3 0 0 1 5 -1.6" fill="none" stroke="#38a838" stroke-width="1.6"/><path d="M8.6 7.4a3 3 0 0 1 -5 1.8" fill="none" stroke="#38a838" stroke-width="1.6"/><path d="M7 3l3 1.6l-2.6 1.8zM4.8 11.4l-3 -1.6l2.6 -1.8z" fill="#38a838"/></g>
<rect x="33.9" y="36.2" width="18.2" height="19.2" fill="#f8f7f1" stroke="#dcd9c8" stroke-width="0.8"/>
<path d="M36 41.2H50M36 46.6H50M36 52H50M38.4 39V54M43.6 39V54M48.8 39V54" stroke="#8c8c94" stroke-width="0.8" stroke-dasharray="1 1" fill="none"/><path d="M37.6 40.4h1.6v1.6h-1.6zM37.6 45.8h1.6v1.6h-1.6zM37.6 51.2h1.6v1.6h-1.6zM42.8 40.4h1.6v1.6h-1.6zM42.8 45.8h1.6v1.6h-1.6zM42.8 51.2h1.6v1.6h-1.6zM48.0 40.4h1.6v1.6h-1.6zM48.0 45.8h1.6v1.6h-1.6zM48.0 51.2h1.6v1.6h-1.6z" fill="#3c3c44"/>
<path d="M53.5 37.5V55.5" stroke="#f6f5ee" stroke-width="0.9"/><path d="M54.7 37.5V55.5" stroke="#c8c6b8" stroke-width="1.5"/><path d="M56.0 37.5V55.5" stroke="#fbfaf5" stroke-width="1.1"/>
<g transform="translate(67.2 45.6)"><path d="M-6.5 0H6.5M0 -6.5V6.5" stroke="#2c2c2c" stroke-width="1"/><rect x="-2.4" y="-2.6" width="4.8" height="5.2" fill="#cfc032" stroke="#857820" stroke-width="0.8"/><path d="M-2.4 0H2.4M0 -2.6V2.6" stroke="#6e641c" stroke-width="0.8" opacity="0.6"/></g>
<path d="M79.5 37.5V55.5" stroke="#f6f5ee" stroke-width="0.9"/><path d="M80.7 37.5V55.5" stroke="#c8c6b8" stroke-width="1.5"/><path d="M82.0 37.5V55.5" stroke="#fbfaf5" stroke-width="1.1"/>
<g transform="translate(92.4 46.3)"><path d="M0 -6.6L2.5 -3.9H0.9V-0.9H3.9V-2.5L6.6 0L3.9 2.5V0.9H0.9V3.9H2.5L0 6.6L-2.5 3.9H-0.9V0.9H-3.9V2.5L-6.6 0L-3.9 -2.5V-0.9H-0.9V-3.9H-2.5Z" fill="#2a6ee0" stroke="#1a50b8" stroke-width="0.6"/></g>
<g transform="translate(108.9 43.5)"><path d="M3.2 3.2L8.0 8.0" stroke="#6a6a6a" stroke-width="3.1" stroke-linecap="round"/><path d="M4.0 3.5L8.2 7.7" stroke="#b4b4b4" stroke-width="0.7" stroke-linecap="round"/><circle r="4.3" fill="#bcd6ec" stroke="#6c7176" stroke-width="1.6"/><circle cx="-0.8" cy="-1" r="2.1" fill="#d4e6f4" opacity="0.8"/>
<path d="M-2.5 0H2.5M0 -2.5V2.5" stroke="#444" stroke-width="1.2"/>
</g>
<g transform="translate(127.2 43.5)"><path d="M3.2 3.2L8.0 8.0" stroke="#6a6a6a" stroke-width="3.1" stroke-linecap="round"/><path d="M4.0 3.5L8.2 7.7" stroke="#b4b4b4" stroke-width="0.7" stroke-linecap="round"/><circle r="4.3" fill="#bcd6ec" stroke="#6c7176" stroke-width="1.6"/><circle cx="-0.8" cy="-1" r="2.1" fill="#d4e6f4" opacity="0.8"/>
<path d="M-2.5 0H2.5" stroke="#444" stroke-width="1.3"/>
</g>
<g transform="translate(145.1 43.5)"><path d="M3.2 3.2L8.0 8.0" stroke="#6a6a6a" stroke-width="3.1" stroke-linecap="round"/><path d="M4.0 3.5L8.2 7.7" stroke="#b4b4b4" stroke-width="0.7" stroke-linecap="round"/><circle r="4.3" fill="#bcd6ec" stroke="#6c7176" stroke-width="1.6"/><circle cx="-0.8" cy="-1" r="2.1" fill="#d4e6f4" opacity="0.8"/>
<rect x="-1.7" y="-1.7" width="3.4" height="3.4" fill="#9a9a9a" stroke="#555" stroke-width="0.7"/>
</g>
<rect x="158.9" y="42.4" width="8" height="10.4" fill="#f6f5ee" stroke="#777" stroke-width="0.8" stroke-dasharray="1 1"/>
<g transform="translate(165.2 43.3)"><path d="M3.1 3.1L7.2 7.2" stroke="#6a6a6a" stroke-width="3.1" stroke-linecap="round"/><path d="M3.9 3.4L7.4 6.9" stroke="#b4b4b4" stroke-width="0.7" stroke-linecap="round"/><circle r="4.1" fill="#bcd6ec" stroke="#6c7176" stroke-width="1.6"/><circle cx="-0.8" cy="-1" r="2.0" fill="#d4e6f4" opacity="0.8"/>
</g>
<path d="M178.7 35V58" stroke="#f6f5ee" stroke-width="0.9"/><path d="M179.9 35V58" stroke="#c8c6b8" stroke-width="1.5"/><path d="M181.2 35V58" stroke="#fbfaf5" stroke-width="1.1"/>
<path d="M184.2 36.5V56" stroke="#f9f8f3" stroke-width="1.5"/><path d="M185.5 37V56.6H183.4" fill="none" stroke="#c4c1b0" stroke-width="0.9"/>
<g fill="#fbfaf5" color="#fbfaf5" transform="translate(1 1)"><path d="M191.7 40V46.8H198.8Z"/><path d="M194.6 43.6C197 40.8 201.4 40.6 202.7 43.8C203.6 46.6 200.6 49.4 197.6 52" fill="none" stroke="currentColor" stroke-width="3.2"/><path d="M222.5 40V46.8H215.4Z"/><path d="M219.6 43.6C217.2 40.8 212.8 40.6 211.5 43.8C210.6 46.6 213.6 49.4 216.6 52" fill="none" stroke="currentColor" stroke-width="3.2"/><path d="M236 39.2L239 39.2L246 49L243.2 50.6Z"/><path d="M247 39.2L244 39.2L237 49L239.8 50.6Z"/><circle cx="238.5" cy="50.6" r="2" fill="none" stroke="currentColor" stroke-width="1.9"/><circle cx="244.7" cy="50.6" r="2" fill="none" stroke="currentColor" stroke-width="1.9"/><path d="M271 41.2q0 -1.2 1.2 -1.2h3.4l1.6 -1h3.2l1.6 1h0.6q1 0 1 1.2v4.8h2.2v6.9h-8.6v-2.4h-6.2z"/><path d="M296 39.2h14v4.4h-3.2v1.4l3.2 3.4v4.5h-14v-4.5l3.2 -3.4v-1.4h-3.2z"/><path d="M314 39.2h14.2v4.4h-4.8v1.4l4.8 3.4v4.5h-14.2v-4.5l4.8 -3.4v-1.4h-4.8z"/><rect x="332.2" y="39.2" width="13.8" height="13.7"/><rect x="350.4" y="39.2" width="13.8" height="13.7"/><circle cx="381" cy="44.4" r="5.1"/><path d="M384.4 48.2L388.6 52" stroke="currentColor" stroke-width="3" stroke-linecap="round" fill="none"/><path d="M396.8 43.8l10 4.6l-10 4.6z"/><path d="M393.8 46.6h3.4M393.8 50.4h3.4M405 48.4h3.2" stroke="currentColor" stroke-width="1.2" fill="none"/><path d="M401 42.4h6.6M404.3 39.2v6.4" stroke="currentColor" stroke-width="1.5" fill="none"/><path d="M414 41h6.4l3 -1.8l1.8 2.6l-1.8 1.8l1.6 2.4l0 6h-11z"/><path d="M412.8 42.4v9.4M426 46.4v5.4M414.6 52.8h10" stroke="currentColor" stroke-width="1.1" stroke-dasharray="1 1" fill="none"/><path d="M431.8 51.8L439.8 43.4" stroke="currentColor" stroke-width="2.8" stroke-linecap="round" fill="none"/><path d="M436.8 40.2l2.4 -1l5.4 5l-2 2.2l-2.4 -2.2l-2 0.6z"/></g>
<g fill="#aca899" color="#aca899"><path d="M191.7 40V46.8H198.8Z"/><path d="M194.6 43.6C197 40.8 201.4 40.6 202.7 43.8C203.6 46.6 200.6 49.4 197.6 52" fill="none" stroke="currentColor" stroke-width="3.2"/><path d="M222.5 40V46.8H215.4Z"/><path d="M219.6 43.6C217.2 40.8 212.8 40.6 211.5 43.8C210.6 46.6 213.6 49.4 216.6 52" fill="none" stroke="currentColor" stroke-width="3.2"/><path d="M236 39.2L239 39.2L246 49L243.2 50.6Z"/><path d="M247 39.2L244 39.2L237 49L239.8 50.6Z"/><circle cx="238.5" cy="50.6" r="2" fill="none" stroke="currentColor" stroke-width="1.9"/><circle cx="244.7" cy="50.6" r="2" fill="none" stroke="currentColor" stroke-width="1.9"/><path d="M271 41.2q0 -1.2 1.2 -1.2h3.4l1.6 -1h3.2l1.6 1h0.6q1 0 1 1.2v4.8h2.2v6.9h-8.6v-2.4h-6.2z"/><path d="M296 39.2h14v4.4h-3.2v1.4l3.2 3.4v4.5h-14v-4.5l3.2 -3.4v-1.4h-3.2z"/><path d="M314 39.2h14.2v4.4h-4.8v1.4l4.8 3.4v4.5h-14.2v-4.5l4.8 -3.4v-1.4h-4.8z"/><rect x="332.2" y="39.2" width="13.8" height="13.7"/><rect x="350.4" y="39.2" width="13.8" height="13.7"/><circle cx="381" cy="44.4" r="5.1"/><path d="M384.4 48.2L388.6 52" stroke="currentColor" stroke-width="3" stroke-linecap="round" fill="none"/><path d="M396.8 43.8l10 4.6l-10 4.6z"/><path d="M393.8 46.6h3.4M393.8 50.4h3.4M405 48.4h3.2" stroke="currentColor" stroke-width="1.2" fill="none"/><path d="M401 42.4h6.6M404.3 39.2v6.4" stroke="currentColor" stroke-width="1.5" fill="none"/><path d="M414 41h6.4l3 -1.8l1.8 2.6l-1.8 1.8l1.6 2.4l0 6h-11z"/><path d="M412.8 42.4v9.4M426 46.4v5.4M414.6 52.8h10" stroke="currentColor" stroke-width="1.1" stroke-dasharray="1 1" fill="none"/><path d="M431.8 51.8L439.8 43.4" stroke="currentColor" stroke-width="2.8" stroke-linecap="round" fill="none"/><path d="M436.8 40.2l2.4 -1l5.4 5l-2 2.2l-2.4 -2.2l-2 0.6z"/></g>
<path d="M315.4 40.6h11.4v1.7h-11.4z" fill="#f4f3ec"/><path d="M317 41.4h8" stroke="#aca899" stroke-width="0.5" stroke-dasharray="2 1"/>
<path d="M274.4 42.6l3 -2.6M276.6 45.4h1.6" stroke="#e6e3d4" stroke-width="0.7" fill="none"/>
<path d="M227.2 37.5V55.5" stroke="#f6f5ee" stroke-width="0.9"/><path d="M228.4 37.5V55.5" stroke="#c8c6b8" stroke-width="1.5"/><path d="M229.7 37.5V55.5" stroke="#fbfaf5" stroke-width="1.1"/>
<path d="M289.3 37.5V55.5" stroke="#f6f5ee" stroke-width="0.9"/><path d="M290.5 37.5V55.5" stroke="#c8c6b8" stroke-width="1.5"/><path d="M291.8 37.5V55.5" stroke="#fbfaf5" stroke-width="1.1"/>
<path d="M368.0 37.5V55.5" stroke="#f6f5ee" stroke-width="0.9"/><path d="M369.2 37.5V55.5" stroke="#c8c6b8" stroke-width="1.5"/><path d="M370.5 37.5V55.5" stroke="#fbfaf5" stroke-width="1.1"/>
<g stroke-width="1" fill="#e8edf6"><path d="M253.5 40.4h3.6l1.8 1.8v6.4h-5.4z" stroke="#3c3c44"/><path d="M258.8 42.8h5l2.2 2.2v5.8h-7.2z" stroke="#1c2c6c"/></g><path d="M254.8 43.3h2.8M254.8 45.3h2.8M260.4 46.6h3.8M260.4 48.6h3.8" stroke="#7a8ab8" stroke-width="0.7"/>
<path d="M450.3 35V58" stroke="#f6f5ee" stroke-width="0.9"/><path d="M451.5 35V58" stroke="#c8c6b8" stroke-width="1.5"/><path d="M452.8 35V58" stroke="#fbfaf5" stroke-width="1.1"/>
<path d="M455.6 36.5V56" stroke="#f9f8f3" stroke-width="1.5"/><path d="M456.9 37V56.6H454.8" fill="none" stroke="#c4c1b0" stroke-width="0.9"/>
<rect x="460.4" y="36.2" width="18.2" height="19" fill="#f7f6ef" stroke="#dcd9c8" stroke-width="0.8"/>
<path d="M469.4 41.6c3.6 -1.2 5.6 1 4 3.6c-1 1.6 -2.8 1.6 -3.6 3.2" fill="none" stroke="#2a62d8" stroke-width="1.5"/><path d="M469.8 44.4c-3.4 1.4 -4.6 4 -3 6.2c1.2 1.4 3.4 1.2 5 0.2" fill="none" stroke="#e04a1e" stroke-width="1.5"/><rect x="463.4" y="40.6" width="5.6" height="3.2" fill="#58c028" stroke="#2c7a14" stroke-width="0.6"/><rect x="471.6" y="49.4" width="5.6" height="3.2" fill="#58c028" stroke="#2c7a14" stroke-width="0.6"/>
<path d="M481.1 37.5V55.5" stroke="#f6f5ee" stroke-width="0.9"/><path d="M482.3 37.5V55.5" stroke="#c8c6b8" stroke-width="1.5"/><path d="M483.6 37.5V55.5" stroke="#fbfaf5" stroke-width="1.1"/>
<g><path d="M489.6 44.6l1.6 -4.2h2.2l1 3.4h1l1 -3.4h2.2l1.6 4.2v6h-4.2v-4.4h-2.2v4.4h-4.2z" fill="#8a949c"/><rect x="489" y="45.6" width="4.6" height="5.2" fill="#dfe8ee" stroke="#5a646c" stroke-width="0.7"/><rect x="496.2" y="45.6" width="4.6" height="5.2" fill="#dfe8ee" stroke="#5a646c" stroke-width="0.7"/><path d="M489 49.8h4.6M496.2 49.8h4.6" stroke="#3c444a" stroke-width="1"/></g>
<path d="M505.8 41v9" stroke="#b8b5a4" stroke-width="0.8" stroke-dasharray="1 1.2"/>
<path d="M506.8 15.5V378" stroke="#f6f3e0" stroke-width="1"/>
<rect x="507.4" y="-8" width="241" height="386.8" fill="#0a4fe0"/>
<rect x="507.4" y="-8" width="241" height="9" fill="#1468f6"/><rect x="507.4" y="0" width="241" height="9.2" fill="url(#tb2)"/>
<text x="510.60" y="3.20" font-size="11.8" fill="#fff" font-weight="bold" textLength="113.20" lengthAdjust="spacing">Digital Oscilloscope</text>
<rect x="510.2" y="8.8" width="238" height="366.4" fill="#ece9d8"/>
<rect x="510.8" y="9.2" width="238" height="350.6" fill="#3a3834"/>
<rect x="512" y="10" width="236" height="349" fill="#000"/>
<path d="M510.6 9.9H748" stroke="#8c8078" stroke-width="1.5"/>
<path d="M512.6 10V359" stroke="#86a088" stroke-width="1.1"/>
<path d="M530.50 11V359M547.84 11V359M565.18 11V359M582.52 11V359M599.86 11V359M617.20 11V359M634.54 11V359M651.88 11V359M669.22 11V359M703.90 11V359M721.24 11V359M738.58 11V359M755.92 11V359M513 11.70H748M513 29.04H748M513 46.38H748M513 63.72H748M513 81.06H748M513 98.40H748M513 115.74H748M513 133.08H748M513 150.42H748M513 167.76H748M513 185.10H748M513 202.44H748M513 219.78H748M513 237.12H748M513 254.46H748M513 271.80H748M513 289.14H748M513 306.48H748M513 323.82H748M513 341.16H748M513 358.50H748" stroke="#064606" stroke-width="1.1" fill="none"/>
<path d="M686.6 11V359" stroke="#8c8c8c" stroke-width="1" stroke-dasharray="3 2.2" fill="none"/>
<path d="M512.6 68.9H684.9V86.4H721.4" fill="none" stroke="#d4c604" stroke-width="1.5"/>
<path d="M512.6 150.4H721.4" fill="none" stroke="#10d2dc" stroke-width="1.2"/>
<path d="M512.6 219.9H721.4" fill="none" stroke="#d0507c" stroke-width="1.3"/>
<path d="M512.6 289.1H721.4" fill="none" stroke="#0cd45a" stroke-width="1.3"/>
<path d="M510.6 359.6H748" stroke="#4a4844" stroke-width="1"/>
<path d="M510.6 360.7H748" stroke="#c8c6bc" stroke-width="1.4"/>
<rect x="510.6" y="361.6" width="238" height="13.6" fill="#eeebe0"/>
<path d="M510.6 361.9H748" stroke="#fdfdfb" stroke-width="0.9"/>
<path d="M524.6 362V375" stroke="#b0ada0" stroke-width="1"/><path d="M525.6 362V375" stroke="#fdfdfb" stroke-width="1"/>
<path d="M519.4 364.6V371.4L515.2 368z" fill="#000"/>
<path d="M510.6 375.2H748" stroke="#4a3a20" stroke-width="1"/>
<rect x="507.4" y="375.6" width="241" height="3.2" fill="#0a3cc8"/>
</g>
</svg></body></html>
